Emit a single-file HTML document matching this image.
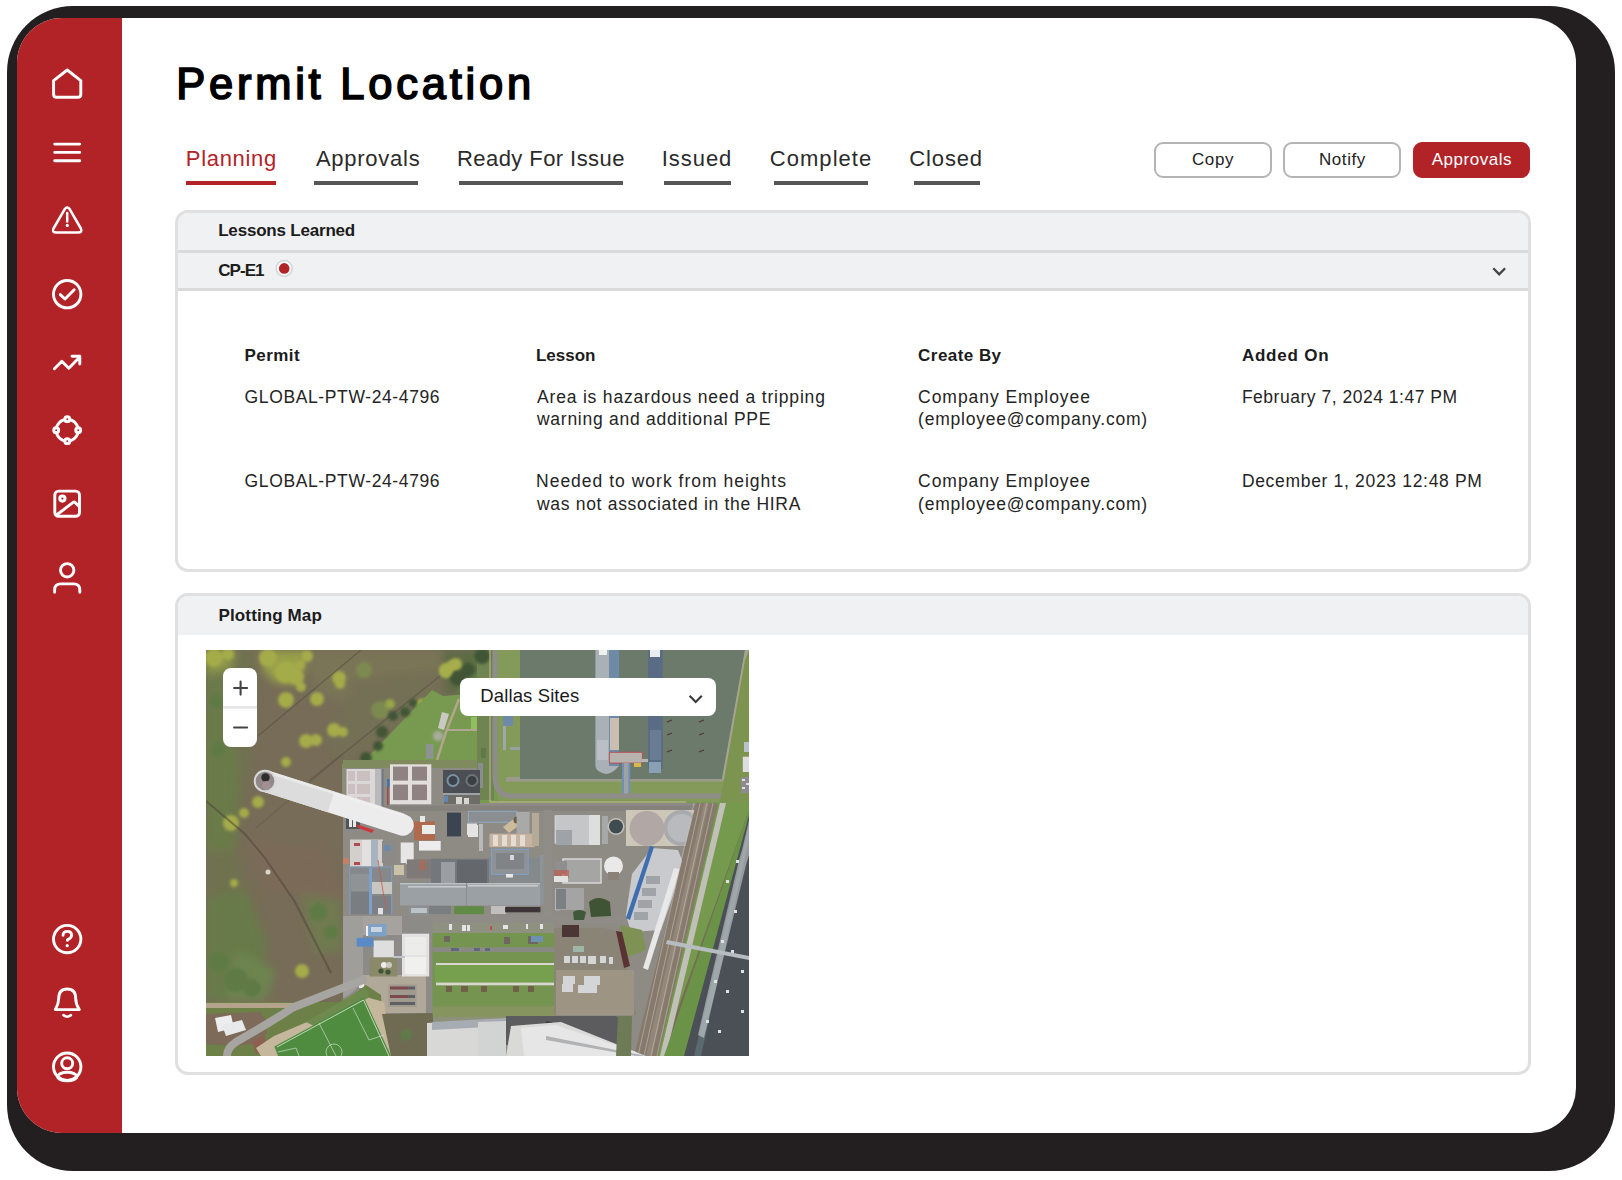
<!DOCTYPE html>
<html><head><meta charset="utf-8">
<style>
html,body{margin:0;padding:0;}
body{width:1622px;height:1180px;background:#fff;position:relative;overflow:hidden;font-family:"Liberation Sans",sans-serif;}
.a{position:absolute;}
.t{position:absolute;white-space:nowrap;line-height:1;}
#frame{left:7px;top:6px;width:1608px;height:1165px;background:#231f20;border-radius:66px;}
#screen{left:17px;top:18px;width:1559px;height:1115px;background:#fff;border-radius:45px;overflow:hidden;}
#side{left:0;top:0;width:105px;height:1115px;background:#b22328;}
.ic{position:absolute;left:47px;width:40px;height:40px;}
.tab{font-size:21px;color:#2e2e2e;letter-spacing:1px;}
.ul{position:absolute;top:181px;height:4px;background:#575757;}
.btn{position:absolute;top:142px;height:36px;box-sizing:border-box;border:2px solid #b4b4b4;border-radius:9px;background:#fff;}
.bt{font-size:18px;color:#222;}
.panel{position:absolute;left:175px;width:1356px;box-sizing:border-box;border:3px solid #e0e0e0;border-radius:13px;background:#fff;overflow:hidden;}
.ph{font-size:17px;font-weight:700;color:#1e1e1e;}
.th{font-size:17px;font-weight:700;color:#222;}
.td{font-size:18px;color:#262626;letter-spacing:0.4px;}
</style></head>
<body>
<div id="frame" class="a"></div>
<div id="screen" class="a">
  <div id="side" class="a"></div>
</div>
<svg class="a" style="left:0;top:0" width="1622" height="1180" viewBox="0 0 1622 1180">
<g fill="none" stroke="#fff" stroke-width="2.9" stroke-linecap="round" stroke-linejoin="round">
  <path d="M67.2 70 L53.6 80.6 V94.2 Q53.6 97.3 56.7 97.3 H77.7 Q80.8 97.3 80.8 94.2 V80.6 Z"/>
  <path d="M54.7 144.1 H79.7 M54.7 152.4 H79.7 M54.7 160.8 H79.7"/>
  <path d="M64.6 209.3 Q67.2 205.6 69.8 209.3 L80.9 228.5 Q82.8 232.5 78 232.5 H56.4 Q51.6 232.5 53.5 228.5 Z" stroke-width="2.5"/>
  <path d="M67.2 213 V221.5" stroke-width="2.5"/>
  <circle cx="67.2" cy="294.2" r="13.7"/>
  <path d="M60.3 294.6 L65 299 L74.2 289.8"/>
  <path d="M54.4 368.7 L61.8 361.3 L68.8 368.3 L79.8 357 M72 356.3 H79.8 V364"/>
  <circle cx="67.2" cy="430.2" r="11" />
  <circle cx="67.2" cy="494.2" r="0" />
  <rect x="54.8" y="491.1" width="24.7" height="25.2" rx="3.8"/>
  <circle cx="62.4" cy="498.6" r="2.6" stroke-width="3"/>
  <path d="M57.2 514.5 L72.8 502.6 Q74 501.6 75.2 502.6 L79.5 506.8"/>
  <circle cx="67.2" cy="570.3" r="6.7"/>
  <path d="M54.6 592.2 V590 Q54.6 583.9 60.7 583.9 H73.7 Q79.8 583.9 79.8 590 V592.2"/>
  <circle cx="67.2" cy="939.1" r="13.7"/>
  <path d="M63 935.4 Q63.2 931.3 67.3 931.3 Q71.6 931.3 71.6 935.2 Q71.6 937.9 67.4 939.8 V940.4" stroke-width="2.8"/>
  <path d="M55.3 1009.6 Q58.7 1004 58.7 998.5 Q58.7 989 67.2 989 Q75.7 989 75.7 998.5 Q75.7 1004 79.3 1009.6 Z"/>
  <path d="M63.4 1015 Q67.2 1018.6 71 1015" stroke-width="2.5"/>
  <circle cx="67.2" cy="1066.7" r="13.7"/>
  <circle cx="67.2" cy="1063.3" r="5.5"/>
  <ellipse cx="67.2" cy="1076.6" rx="9.6" ry="4.3"/>
</g>
<g fill="#fff">
  <circle cx="67.3" cy="225.4" r="1.6"/>
  <circle cx="67.2" cy="945.7" r="1.6"/>
</g>
<g fill="#b22328" stroke="#fff" stroke-width="3">
  <circle cx="67.3" cy="419.2" r="2.4"/>
  <circle cx="56.2" cy="430.2" r="2.4"/>
  <circle cx="78.2" cy="430.2" r="2.4"/>
  <circle cx="67.3" cy="441.2" r="2.4"/>
</g>
</svg>

<!-- tab underlines -->
<div class="ul" style="left:186px;width:90px;background:#b22328;"></div>
<div class="ul" style="left:314px;width:104px;"></div>
<div class="ul" style="left:459px;width:164px;"></div>
<div class="ul" style="left:664px;width:67px;"></div>
<div class="ul" style="left:774px;width:94px;"></div>
<div class="ul" style="left:914px;width:66px;"></div>

<!-- buttons -->
<div class="btn" style="left:1154px;width:118px;"></div>
<div class="btn" style="left:1283px;width:118px;"></div>
<div class="btn" style="left:1413px;width:117px;background:#b22328;border-color:#b22328;"></div>

<!-- lessons panel -->
<div class="panel" style="top:210px;height:362px;">
  <div class="a" style="left:0;top:0;width:100%;height:78px;background:#f0f1f3;"></div>
  <div class="a" style="left:0;top:37px;width:100%;height:3px;background:#dadada;"></div>
  <div class="a" style="left:0;top:75px;width:100%;height:3px;background:#dadada;"></div>
</div>
<svg class="a" style="left:270px;top:254px" width="30" height="30" viewBox="270 254 30 30">
<circle cx="284.2" cy="268.4" r="8" fill="#fff" stroke="#d6d6d6" stroke-width="1.6"/>
<circle cx="284.2" cy="268.4" r="5.3" fill="#b22328"/>
</svg>
<svg class="a" style="left:1485px;top:260px" width="30" height="24" viewBox="1485 260 30 24">
<path d="M1493.3 268.2 L1499.2 274.4 L1505.1 268.2" fill="none" stroke="#444" stroke-width="2.3"/>
</svg>

<!-- plotting panel -->
<div class="panel" style="top:593px;height:482px;">
  <div class="a" style="left:0;top:0;width:100%;height:38.5px;background:#f0f1f3;"></div>
</div>
<!--MAP-->
<svg class="a" style="left:206px;top:650px" width="543" height="406" viewBox="0 0 543 406">
<defs>
  <clipPath id="mc"><rect x="0" y="0" width="543" height="406"/></clipPath>
</defs>
<g clip-path="url(#mc)">
<!-- forest base -->
<defs>
<filter id="blur2" x="-20%" y="-20%" width="140%" height="140%"><feGaussianBlur stdDeviation="4"/></filter>
<filter id="blur1" x="-20%" y="-20%" width="140%" height="140%"><feGaussianBlur stdDeviation="1.5"/></filter>
</defs>
<rect x="0" y="0" width="543" height="406" fill="#766c57"/>
<g filter="url(#blur2)">
  <path d="M0 0 H50 L45 100 L30 200 L45 260 L0 280 Z" fill="#6f7250"/>
  <path d="M0 250 L40 240 L60 290 L55 350 L0 352 Z" fill="#687a4a"/>
  <path d="M30 300 L70 320 L60 350 L20 352 Z" fill="#6d8450"/>
  <path d="M95 246 L134 240 L137 300 L110 305 Z" fill="#6f7a50"/>
  <path d="M0 90 L25 85 L30 150 L0 160 Z" fill="#6a7a48"/>
  <path d="M100 0 H240 L230 30 L150 60 L110 40 Z" fill="#7a7456"/>
  <path d="M150 30 L230 20 L240 45 L160 100 L135 110 L120 90 Z" fill="#736f55"/>
  <path d="M236 0 H285 V40 L240 45 Z" fill="#5d6a45"/>
  <path d="M40 190 L120 200 L137 250 L60 240 Z" fill="#7b6a58"/>
</g>
<g filter="url(#blur2)">
  <path d="M55 0 H100 L98 20 L90 34 L70 33 L58 22 Z" fill="#97a04a"/>
  <path d="M0 0 H30 L25 20 L0 25 Z" fill="#8d9848"/>
  <path d="M0 25 L30 30 L28 200 L0 200 Z" fill="#6b7a4a"/>
</g>
<g filter="url(#blur1)">
<g fill="#a4ab4a">
<circle cx="80" cy="22" r="11"/><circle cx="90" cy="27" r="8"/><circle cx="62" cy="8" r="9"/><circle cx="101" cy="6" r="6"/><circle cx="94" cy="15" r="5"/><circle cx="8" cy="8" r="9"/><circle cx="22" cy="4" r="6"/><circle cx="80" cy="50" r="8"/><circle cx="95" cy="37" r="5"/><circle cx="111" cy="49" r="7"/><circle cx="133" cy="28" r="7"/><circle cx="134" cy="34" r="5"/><circle cx="128" cy="80" r="7"/><circle cx="137" cy="82" r="5"/><circle cx="100" cy="91" r="7"/><circle cx="110" cy="90" r="6"/><circle cx="80" cy="112" r="5"/><circle cx="216" cy="55" r="6.5"/><circle cx="240" cy="22" r="6"/><circle cx="246" cy="16" r="6"/><circle cx="52" cy="152" r="6"/><circle cx="25" cy="173" r="8"/><circle cx="38" cy="163" r="5"/><circle cx="96" cy="321" r="7"/><circle cx="28" cy="233" r="4"/>
<circle cx="174" cy="60" r="9" fill="#7d8a50"/><circle cx="158" cy="20" r="8" fill="#7d8a50"/>
</g>
<g fill="#5f7a45">
  <circle cx="12" cy="312" r="10"/><circle cx="30" cy="330" r="12"/><circle cx="46" cy="338" r="9"/>
  <circle cx="112" cy="262" r="9"/><circle cx="125" cy="282" r="7"/><circle cx="10" cy="52" r="7"/>
  <circle cx="12" cy="100" r="7"/><circle cx="258" cy="40" r="7"/><circle cx="270" cy="28" r="6"/><circle cx="275" cy="8" r="8"/>
</g>
</g>
<path d="M103 131 L234 26" stroke="#5a5044" stroke-width="1.5" opacity="0.6"/>
<path d="M52 86 L155 0" stroke="#5a5044" stroke-width="1.5" opacity="0.6"/>
<path d="M0 151 L39 184 L59 208 L89 252 L125 323" fill="none" stroke="#4f463d" stroke-width="2" opacity="0.55"/>
<path d="M50 178 L137 104" fill="none" stroke="#5a5044" stroke-width="1.2" opacity="0.35"/>
<circle cx="62" cy="222" r="2.5" fill="#d8d8cc"/>
<!-- lawn -->
<path d="M136 114 L160 109 L226 40 L237 46 L262 44 L276 18 L284 0 L543 0 L543 155 L136 155 Z" fill="#789a50"/>
<g filter="url(#blur1)" fill="#3f5535">
<circle cx="160" cy="108" r="6"/><circle cx="172" cy="96" r="5"/><circle cx="176" cy="82" r="6"/><circle cx="187" cy="66" r="5"/>
<circle cx="199" cy="62" r="5"/><circle cx="207" cy="53" r="4"/><circle cx="252" cy="28" r="8"/><circle cx="262" cy="20" r="7"/>
</g>
<circle cx="184" cy="54" r="5" fill="#97a548" filter="url(#blur1)"/>
<g filter="url(#blur1)" fill="#a6ae4c"><circle cx="240" cy="20" r="7"/><circle cx="250" cy="14" r="6"/></g>
<path d="M253 49 L240 82 L231 110" fill="none" stroke="#b3a58c" stroke-width="2.5"/>
<path d="M236 62 L243 64 L238 80 L232 78 Z" fill="#c9c9c4"/>
<rect x="220" y="94" width="7.5" height="14.6" fill="#8d9293"/>
<circle cx="232" cy="86" r="5" fill="#a9ad9f" filter="url(#blur1)"/>
<rect x="265" y="67" width="10" height="14" fill="#8fbf5e"/>
<path d="M240 79 H272 V81 H240 Z" fill="#b0a590"/>
<!-- left strip near basin -->
<rect x="271" y="0" width="17" height="150" fill="#6f8450"/>
<circle cx="276" cy="6" r="8" fill="#3f5535" filter="url(#blur1)"/>
<rect x="272" y="113" width="5" height="25" fill="#8a8c8e"/>
<rect x="275" y="98" width="5" height="10" fill="#5f7a45"/>
<!-- basin embankment -->
<path d="M292 0 H314 V129 H515 L537 0 H543 V152 H292 Z" fill="#849a5a"/>
<path d="M300 127 H518 L520 131.5 H300 Z" fill="#9c9a8c"/>
<!-- road around basin -->
<path d="M289 0 V128 Q290 145 305 146 H543" fill="none" stroke="#8e8d89" stroke-width="5"/>
<path d="M284 0 V152 H480" fill="none" stroke="#c8b995" stroke-width="1"/>
<rect x="297" y="60" width="10" height="16" fill="#6f8aa8"/>
<rect x="297" y="76" width="3" height="24" fill="#a3a6a8"/>
<rect x="304" y="97" width="10" height="3" fill="#9aa0a2"/>
<!-- water -->
<path d="M314 0 H539 L516 129 H314 Z" fill="#6b7a6b"/>
<path d="M539 0 H543 V10 L522 130 L516 129 Z" fill="#a9a394"/>
<!-- ships -->
<path d="M389.4 0 H413 V116 Q406 124 400 124 Q390 122 389.4 116 Z" fill="#a9b0b6"/>
<rect x="403" y="0" width="10" height="116" fill="#6e8aa6"/>
<rect x="391" y="40" width="11" height="2" fill="#d8c870" opacity="0.6"/>
<rect x="404" y="68" width="9" height="32" fill="#c8beb2"/>
<rect x="391" y="90" width="11" height="20" fill="#b9bfc4"/>
<rect x="393" y="0" width="8" height="5" fill="#f0f0f0"/>
<path d="M442.1 0 H456.7 V118 Q452 124 447 124 Q442.1 121 442.1 116 Z" fill="#5a6c85"/>
<rect x="444" y="0" width="10" height="7" fill="#e8ecee"/>
<rect x="444" y="80" width="11" height="30" fill="#6a7c94"/>
<rect x="443" y="112" width="12" height="11" fill="#8aa0b4"/>
<path d="M403.4 102.3 H436.4 V113.1 H403.4 Z" fill="#b9b3b0"/>
<path d="M403.4 102.3 H436.4 V113.1 H403.4 Z" fill="none" stroke="#b84a4e" stroke-width="0.9"/>
<rect x="436" y="109" width="6" height="3" fill="#b8b8b0"/>
<rect x="428" y="113" width="7" height="4" fill="#d8b848"/>
<rect x="416" y="113" width="8.3" height="30.6" fill="#7090b8"/>
<rect x="418" y="113" width="4.3" height="30.6" fill="#9ea2a4"/>
<g stroke="#4a3a34" stroke-width="1.2"><path d="M461 72 L466 70 M461 85 L466 83 M461 102 L466 100 M493 72 L498 70 M493 85 L498 83 M493 102 L498 100"/></g>
<!-- right embankment & buildings -->
<path d="M543 0 V152 H514 L539 10 Z" fill="#7d9451"/>
<rect x="536.8" y="106.7" width="6.2" height="15.3" fill="#dcdddf"/>
<rect x="538" y="92" width="5" height="10" fill="#b8c0c8"/>
<rect x="535" y="127" width="8" height="16" fill="#8d8a90"/>
<g fill="#e0e0e0"><rect x="536" y="129" width="3" height="2"/><rect x="540" y="133" width="3" height="2"/><rect x="536" y="137" width="3" height="2"/></g>
<!-- industrial base -->
<path d="M137 112 L271 112 L271 153 L500 153 L470 260 L445 350 L430 406 L137 406 Z" fill="#8e8a84"/>
<rect x="137" y="110" width="134" height="8" fill="#7f8a5e"/>
<!-- road across -->
<rect x="175" y="155.5" width="335" height="5.5" fill="#85827e"/>
<!-- buildings top row -->
<rect x="140.5" y="119" width="35" height="37.5" fill="#dcd8d7"/>
<g fill="#cbbfbf"><rect x="142" y="121" width="7" height="10"/><rect x="151" y="121" width="13" height="10"/><rect x="142" y="134" width="7" height="10"/><rect x="151" y="134" width="13" height="10"/><rect x="142" y="147" width="7" height="8"/><rect x="151" y="147" width="13" height="8"/></g>
<rect x="169" y="119" width="6" height="37.5" fill="#b9b9bb"/>
<rect x="175.5" y="119" width="2" height="37.5" fill="#6e7683"/>
<rect x="181" y="129" width="2.5" height="8" fill="#3f74b0"/>
<rect x="181" y="137" width="1.5" height="18" fill="#a4404a"/>
<rect x="184" y="114.3" width="41.3" height="40" fill="#e1dedc"/>
<g fill="#8e8282"><rect x="187" y="116.6" width="15" height="14"/><rect x="206" y="116.6" width="15" height="14"/><rect x="187" y="134.6" width="15" height="15.5"/><rect x="206" y="134.6" width="15" height="15.5"/></g>
<rect x="237" y="120" width="37" height="23" fill="#4b4f53"/>
<circle cx="247" cy="130.5" r="6.5" fill="#7a93a6"/><circle cx="266" cy="130.5" r="6.5" fill="#6f7478"/>
<circle cx="247" cy="130.5" r="4.5" fill="#3c4247"/><circle cx="266" cy="130.5" r="4.5" fill="#3a3f44"/>
<rect x="237" y="143" width="37" height="2" fill="#9fa2a4"/>
<rect x="238" y="145" width="36" height="9" fill="#6f6d68"/>
<rect x="238" y="146" width="4" height="6" fill="#5f87b8"/>
<rect x="250" y="147" width="6" height="7" fill="#d8d6d2"/>
<rect x="258" y="148" width="5" height="6" fill="#d8d6d2"/>
<!-- second row -->
<rect x="138.6" y="166" width="19" height="15" fill="#8a8a88"/>
<rect x="140" y="167" width="14" height="12" fill="#4f5457"/>
<rect x="143" y="168" width="3" height="9" fill="#e8e8e8"/><rect x="147" y="168" width="3" height="9" fill="#e8e8e8"/>
<path d="M150 174 L168 180 L166 183 L152 178 Z" fill="#c8383c"/>
<rect x="241" y="162.6" width="14" height="23.8" fill="#3a4550"/>
<rect x="261" y="173.5" width="10" height="11.5" fill="#e2e2e2"/>
<rect x="208" y="171.4" width="21" height="19" fill="#b06a4e"/>
<rect x="216" y="175" width="13" height="9" fill="#ececea"/>
<rect x="214" y="166" width="5" height="6" fill="#e6e6e6"/>
<rect x="262.5" y="161.2" width="48" height="11" fill="#8a8e90"/>
<rect x="262.5" y="161.2" width="48" height="11" fill="none" stroke="#8fb0d0" stroke-width="0.8"/>
<rect x="262" y="175" width="10" height="12" fill="#e4e4e4"/>
<rect x="273" y="174" width="4" height="27" fill="#b8b8b8"/>
<path d="M297 177 L309 168 L315 174 L303 183 Z" fill="#cdbb9c"/>
<circle cx="311" cy="170" r="3.5" fill="#6a5a4c"/>
<rect x="310.6" y="162" width="13" height="21.6" fill="#a9a9a7"/>
<rect x="283.5" y="183.6" width="45" height="13.6" fill="#c6b3a0"/>
<g fill="#e4ddd4"><rect x="287" y="185" width="5" height="11"/><rect x="296" y="185" width="5" height="11"/><rect x="305" y="185" width="5" height="11"/><rect x="314" y="185" width="5" height="11"/></g>
<rect x="326" y="163" width="7" height="33" fill="#b3aa98"/>
<!-- left column buildings -->
<rect x="144" y="189.5" width="33" height="27" fill="#d2cfcc"/>
<rect x="156" y="190" width="9" height="26" fill="#e3e1df"/>
<rect x="148" y="193" width="6" height="3" fill="#b24a50"/>
<rect x="148" y="212" width="6" height="3" fill="#b24a50"/>
<rect x="165" y="190" width="7" height="26" fill="#a7b4c0"/>
<rect x="176" y="191" width="13" height="22" fill="#8b8a86"/>
<rect x="178" y="195" width="7" height="6" fill="#6f8aa8"/>
<rect x="137" y="208" width="6" height="6" fill="#c2806a"/>
<rect x="143.8" y="217" width="42" height="50" fill="#86898c"/>
<rect x="143.8" y="217" width="42" height="50" fill="none" stroke="#7ea0c8" stroke-width="0.9"/>
<rect x="145" y="224" width="18" height="17" fill="#8f9396"/>
<rect x="163" y="218" width="3" height="48" fill="#7ea0c8"/>
<rect x="145" y="242" width="18" height="24" fill="#7a7e82"/>
<rect x="166" y="232" width="20" height="12" fill="#c8c6c2"/>
<rect x="166" y="246" width="19" height="20" fill="#7c8084"/>
<rect x="172" y="258" width="5" height="7" fill="#e2e2e2"/>
<path d="M172 210 L180 260" stroke="#c65a4a" stroke-width="0.8"/>
<!-- big central building -->
<rect x="194.7" y="192.5" width="13" height="21.7" fill="#e6e6e6"/>
<rect x="213" y="191" width="21.7" height="9.6" fill="#ececec"/>
<rect x="188" y="213" width="12" height="20" fill="#8e8c88"/>
<rect x="188" y="215" width="10" height="10" fill="#c9c2a8"/>
<rect x="200.8" y="209.4" width="24.4" height="19" fill="#7f7a78"/>
<rect x="214" y="210" width="5" height="10" fill="#a86a5a"/>
<rect x="225" y="208.7" width="110" height="25" fill="#74777b"/>
<rect x="235" y="212" width="14" height="21" fill="#9a9ea2"/>
<rect x="251" y="210" width="30" height="23" fill="#64676c"/>
<rect x="283" y="208" width="52" height="25" fill="#86898c"/>
<rect x="285.5" y="199.2" width="36.7" height="25.1" fill="#8e9295"/>
<rect x="285.5" y="199.2" width="36.7" height="25.1" fill="none" stroke="#7ea0c8" stroke-width="1"/>
<rect x="290" y="203" width="28" height="16" fill="#818487"/>
<rect x="304" y="205" width="4" height="5" fill="#d8d8d8"/>
<rect x="300" y="224" width="7" height="3.5" fill="#e8e8e8"/>
<rect x="194" y="233.1" width="140.4" height="22.4" fill="#9aa0a4"/>
<rect x="194" y="233.1" width="140.4" height="1.2" fill="#c0c5c8"/>
<g fill="#c6cacd"><rect x="202" y="236" width="58" height="1.6"/><rect x="262" y="235" width="70" height="1.6"/></g>
<rect x="260" y="233" width="1" height="22" fill="#888d91"/>
<rect x="334" y="205" width="8" height="50" fill="#8d9498"/>
<rect x="348.6" y="165.3" width="5.7" height="28.5" fill="#d0d2d3"/>
<rect x="349" y="238.6" width="5.3" height="21.7" fill="#c8cacb"/>
<rect x="337.7" y="160" width="8" height="120" fill="#908d88"/>
<rect x="203" y="256" width="20" height="9" fill="#8a9096"/>
<rect x="205" y="258" width="16" height="5" fill="#bcc3c6"/>
<rect x="223" y="256" width="22" height="8" fill="#7b7e7f"/>
<rect x="248.2" y="256.2" width="29.8" height="8.1" fill="#5f8b45"/>
<rect x="285" y="256" width="15" height="8" fill="#c0bfbd"/>
<rect x="299.1" y="257" width="35.3" height="5.3" fill="#3d3438"/>
<rect x="137" y="264.3" width="290" height="8.2" fill="#8f8c88"/>
<g fill="#e0e0e0"><rect x="239" y="274" width="3" height="5"/><rect x="257" y="273" width="3" height="5"/><rect x="262" y="273" width="3" height="5"/><rect x="280" y="273" width="2" height="5"/><rect x="330" y="273" width="3" height="5"/><rect x="300" y="274" width="3" height="5"/></g>
<!-- right middle (second row right part) -->
<rect x="350" y="165" width="44" height="30" fill="#c4c6c8"/>
<rect x="350" y="180" width="16" height="15" fill="#9ea3a7"/>
<rect x="383" y="165" width="11" height="30" fill="#dddede"/>
<rect x="396" y="166" width="6" height="28" fill="#a7a9a9"/>
<circle cx="410" cy="176.5" r="8.5" fill="#c4c0b8"/>
<circle cx="410" cy="176.5" r="7" fill="#3e4c52"/>
<rect x="420" y="160" width="70" height="36" fill="#cdc7b9"/>
<circle cx="441" cy="178.5" r="17.5" fill="#b1a7a4"/>
<circle cx="475.5" cy="178" r="18" fill="#a9aaad"/>
<circle cx="475.5" cy="178" r="14" fill="#b9babd"/>
<rect x="357" y="209" width="38" height="24" fill="#a5a5a3"/>
<rect x="357" y="209" width="38" height="24" fill="none" stroke="#d8d8d6" stroke-width="1.5"/>
<rect x="349" y="211" width="12" height="13" fill="#8f8f8f"/>
<rect x="348" y="220" width="15" height="8" fill="#c7544a" opacity="0.6"/>
<rect x="348" y="226" width="14" height="6" fill="#e2e2e0"/>
<circle cx="407.5" cy="216" r="9.5" fill="#e9e9e9"/>
<rect x="402" y="222" width="11" height="8" fill="#8a8278"/>
<rect x="349.5" y="238" width="28.5" height="22" fill="#a4a4a4"/>
<rect x="350" y="239" width="10" height="20" fill="#7c8084"/>
<path d="M383 252 Q392 244 404 252 L405 266 L385 267 Z" fill="#3e5434"/>
<path d="M367 262 Q373 258 380 262 L378 270 L368 270 Z" fill="#40583a"/>
<!-- machinery right -->
<path d="M426 224 L446 198 L472 200 L478 215 L455 280 L425 282 L420 265 Z" fill="#c8cacd"/>
<path d="M420 268 L444 196 L448 197 L424 270 Z" fill="#3f6eb0"/>
<path d="M468 218 L474 219 L442 320 L437 318 Z" fill="#e8e8e8"/>
<g fill="#a0a4a8"><rect x="440" y="226" width="14" height="8"/><rect x="436" y="238" width="14" height="8"/><rect x="432" y="250" width="14" height="8"/><rect x="428" y="262" width="14" height="8"/></g>

<!-- green fields lower middle -->
<rect x="226.5" y="273" width="122" height="10" fill="#8e9080"/>
<g fill="#e4e4e4"><rect x="243" y="274" width="3" height="6"/><rect x="256" y="275" width="4" height="6"/><rect x="261" y="275" width="3" height="6"/><rect x="297" y="275" width="5" height="4"/><rect x="320" y="274" width="2" height="5"/><rect x="334" y="274" width="3" height="5"/></g>
<rect x="284" y="276" width="2" height="4" fill="#c84848"/>
<path d="M226.5 283 H348.6 V367 H226.5 Z" fill="#74944f"/>
<rect x="226.5" y="297.3" width="122" height="4.7" fill="#8a8a84"/>
<g fill="#5c6a78"><rect x="245" y="298" width="8" height="3"/><rect x="268" y="298" width="6" height="3"/><rect x="279" y="298" width="5" height="3"/></g>
<g fill="#6e6660"><rect x="238" y="286" width="6" height="6"/><rect x="298" y="287" width="6" height="7"/><rect x="322" y="286" width="10" height="8"/></g>
<rect x="325" y="286" width="12" height="6" fill="#6f90b0"/>
<rect x="230" y="313" width="118" height="2" fill="#d8d6cf"/>
<rect x="229" y="315" width="119" height="17.6" fill="#77a04e"/>
<rect x="230" y="332.6" width="118" height="2.7" fill="#d8d6cf"/>
<g fill="#6f6048"><rect x="240" y="336" width="6" height="6"/><rect x="255" y="336" width="7" height="6"/><rect x="275" y="336" width="6" height="6"/><rect x="307" y="336" width="6" height="6"/><rect x="322" y="336" width="6" height="6"/></g>
<rect x="226.5" y="356.3" width="122" height="10.8" fill="#86955f"/>
<rect x="226.5" y="367" width="122" height="5.6" fill="#8d917a"/>
<!-- containers yard -->
<path d="M348 278 H398 L414 282 L430 365 H348 Z" fill="#8a8477"/>
<path d="M350 320 H428 V365 H350 Z" fill="#9e9483"/>
<rect x="356" y="275" width="17" height="12" fill="#4b3535"/>
<g fill="#d3d5d6">
<rect x="358" y="306" width="6" height="7"/><rect x="366" y="306" width="6" height="7"/><rect x="374" y="306" width="6" height="7"/><rect x="382" y="306" width="8" height="8"/><rect x="394" y="306" width="6" height="7"/><rect x="403" y="307" width="4" height="7"/>
<rect x="357" y="326" width="12" height="8"/><rect x="378" y="326" width="16" height="9"/><rect x="356" y="334" width="11" height="8"/><rect x="372" y="335" width="19" height="8"/>
</g>
<rect x="367" y="296" width="11" height="6" fill="#9fb5a6"/>
<path d="M414 275 L436 280 L440 300 L420 308 Z" fill="#7f9256"/>
<path d="M410 281 L416 282 L424 316 L418 318 Z" fill="#5b3233"/>
<!-- rails & right strips -->
<path d="M490 153 H512 L452 406 H428 Z" fill="#867a6d"/>
<path d="M498 153 H503 L446 406 H440 Z" fill="#9c8f82" opacity="0.6"/>
<g stroke="#c9c2b8" stroke-width="0.7" opacity="0.8"><path d="M488 153 L432 406 M494 153 L438 406 M501 153 L445 406 M507 153 L451 406"/></g>
<path d="M512 153 H543 V160 L455 406 H452 Z" fill="#759a4d"/>
<path d="M514 153 H520 L460 406 H454 Z" fill="#c0c0b8"/>
<path d="M543 160 L543 175 L480 406 H458 Z" fill="#6b9348"/>
<path d="M543 165 V406 H478 Z" fill="#4b4f56"/>
<path d="M543 175 V190 L495 406 H488 Z" fill="#5a6a6e"/>
<g fill="#dfe2e4">
<rect x="520" y="230" width="3" height="3"/><rect x="530" y="210" width="3" height="3"/><rect x="528" y="260" width="3" height="3"/><rect x="515" y="290" width="3" height="3"/><rect x="525" y="300" width="3" height="3"/><rect x="508" y="330" width="3" height="3"/><rect x="520" y="340" width="3" height="3"/><rect x="500" y="370" width="3" height="3"/><rect x="512" y="380" width="3" height="3"/><rect x="535" y="320" width="3" height="3"/><rect x="535" y="360" width="3" height="3"/>
</g>
<path d="M543 170 L536 200 L533 210 L500 350 L492 385 L498 388 L540 215 L543 205 Z" fill="#e2e4e6" opacity="0.5"/>
<path d="M461 290 L543 306 V310 L460 294 Z" fill="#b7bcc0"/>
<!-- industrial left: ground & roads -->
<rect x="137" y="266" width="89" height="100" fill="#8d8b87"/>
<path d="M139 266 H157 V330 Q150 342 137 348 V266 Z" fill="#a09e9a"/>
<path d="M157 325 H220 V363 H157 Z" fill="#b0a898"/>
<path d="M157 266 H196 V285 H157 Z" fill="#a6a39f"/>
<rect x="196" y="283.7" width="27.2" height="42.8" fill="#e2e2e2"/>
<rect x="199" y="287" width="21" height="18" fill="#ececea"/>
<rect x="199" y="307" width="21" height="17" fill="#f0f0ef"/>
<rect x="167.5" y="290.5" width="20.4" height="17" fill="#dedede"/>
<rect x="160" y="276" width="7" height="10" fill="#f0f0f0"/>
<rect x="162.1" y="274.2" width="18.3" height="12.2" fill="#7ea1c8"/>
<rect x="165" y="277" width="11" height="5" fill="#c8d4de"/>
<rect x="150.6" y="287.8" width="16.9" height="8.8" fill="#5b8bc7"/>
<rect x="163.5" y="307.5" width="27.8" height="19" fill="#8a8a6a"/>
<circle cx="178" cy="315" r="3" fill="#ececec"/>
<circle cx="183" cy="315" r="3" fill="#c9c9c0"/>
<circle cx="175" cy="321" r="2.6" fill="#3f5535"/><circle cx="182" cy="322" r="2.6" fill="#3f5535"/>
<rect x="187" y="306" width="12" height="2" fill="#c0c4c6"/>
<rect x="182.5" y="334.6" width="28" height="22.4" fill="#a09a8e"/>
<g fill="#7a4a4c"><rect x="184" y="336.5" width="18" height="3"/><rect x="184" y="345" width="18" height="3"/></g>
<g fill="#5f5f66"><rect x="202" y="336.5" width="7" height="3"/><rect x="202" y="345" width="7" height="3"/><rect x="184" y="352" width="25" height="3"/></g>
<rect x="153" y="333" width="5" height="5" fill="#e8e8e8"/>
<!-- left strip below forest: path, road, grass -->
<path d="M0 352 L137 352 L160 335 L175 345 L178 406 L0 406 Z" fill="#6c8048"/>
<path d="M0 353 H92 L96 358 H0 Z" fill="#b4a48c"/>
<path d="M0 364 L55 362 L62 375 L58 392 L30 396 L0 394 Z" fill="#7e6a58"/>
<path d="M9 368 L25 365 L28 378 L12 382 Z" fill="#ededee"/>
<path d="M16 375 L36 370 L40 380 L20 386 Z" fill="#e8e9ea"/>
<path d="M46 392 L58 386 L62 398 L50 404 Z" fill="#8f5e52"/>
<path d="M50 398 L68 386 L160 347 L178 352 L186 406 H55 Z" fill="#c4b79c"/>
<path d="M88 357 L157 330" stroke="#a7a5a1" stroke-width="8" stroke-linecap="round"/>
<path d="M88 357 Q60 375 30 392 Q21 398 21 406" fill="none" stroke="#a7a5a1" stroke-width="8"/>
<path d="M100 372 L158 338 L163 342 L162 348 L108 376 Z" fill="#6f8a4f"/>
<path d="M68.4 396.6 L158 347.6 L185 406 H72 Z" fill="#4f8c40"/>
<path d="M71 397 L157.5 350 L183 406" fill="none" stroke="#dfeadb" stroke-width="0.8"/>
<path d="M113 373 L130 406" stroke="#dfeadb" stroke-width="0.6"/>
<path d="M147 358 L163 390 L178 385" fill="none" stroke="#dfeadb" stroke-width="0.6"/>
<circle cx="128" cy="402" r="8" fill="none" stroke="#dfeadb" stroke-width="0.6"/>
<path d="M72 402 L90 398 L93 406" fill="none" stroke="#dfeadb" stroke-width="0.6"/>
<!-- bottom area -->
<path d="M176 364 L226.5 363 L230 406 H185 Z" fill="#6f6a52"/>
<circle cx="200" cy="385" r="6" fill="#5f7a48" filter="url(#blur1)"/>
<path d="M221 373 L300 369 V406 H221 Z" fill="#d8d8d7"/>
<path d="M226 372 L300 368 V376 L226 380 Z" fill="#a6acb2"/>
<path d="M300 366 H410 Q420 370 418 395 H300 Z" fill="#5c5c5e"/>
<path d="M340 371 L346 372 L344 384 L338 383 Z" fill="#3f3f40"/>
<path d="M305 376 L355 372 L440 406 H300 Z" fill="#d9d9d8"/>
<path d="M315 378 L350 375 L430 402 L432 406 H318 Z" fill="#e6e6e6"/>
<path d="M340 386 L440 406 H430 L340 390 Z" fill="#b0b2b4"/>
<path d="M272 372 L300 371 V406 H272 Z" fill="#d2d3d3"/>
<path d="M412 366 L426 366 L425 406 L410 406 Z" fill="#6e7b56"/>
</g>
<!-- chimney -->
<g>
  <path d="M59 131 L197 175" stroke="#ececec" stroke-width="21.5" stroke-linecap="round"/>
  <path d="M59 131 L125 152" stroke="#dcdcdc" stroke-width="21.5"/>
  <path d="M62 122 L198 165" stroke="#f2f2f2" stroke-width="3" opacity="0.6"/>
  <circle cx="59" cy="131" r="11.3" fill="#d8d8d8"/>
  <circle cx="59" cy="131" r="9.3" fill="#8f8888"/>
  <circle cx="59.5" cy="127.5" r="4.2" fill="#2e2c2c"/>
  <circle cx="60.5" cy="135.5" r="4.5" fill="#a09090"/>
</g>
<!-- zoom control -->
<rect x="17" y="18" width="34" height="79" rx="8" fill="#fff"/>
<rect x="17" y="56" width="34" height="2.8" fill="#e6e6e6"/>
<path d="M34.6 31.6 V44.6 M28.1 38 H41.1" stroke="#444" stroke-width="2.1" stroke-linecap="round"/>
<path d="M28.1 77.5 H41.1" stroke="#444" stroke-width="2.1" stroke-linecap="round"/>
<!-- dropdown -->
<rect x="254" y="28" width="256" height="38" rx="8" fill="#fff"/>
<path d="M483.6 45.8 L489.7 52 L495.8 45.8" fill="none" stroke="#3a3a3a" stroke-width="2.1"/>
</svg>

<!--/MAP-->
<!--TEXT-->
<div class="t" style="left:176.2px;top:62.9px;font-size:43.5px;font-weight:400;letter-spacing:3.765px;color:#000;-webkit-text-stroke:1.7px #000;">Permit Location</div>
<div class="t" style="left:185.8px;top:148.0px;font-size:22px;font-weight:400;letter-spacing:0.686px;color:#b22328;">Planning</div>
<div class="t" style="left:315.9px;top:148.0px;font-size:22px;font-weight:400;letter-spacing:0.75px;color:#2b2b2b;">Approvals</div>
<div class="t" style="left:457.0px;top:148.0px;font-size:22px;font-weight:400;letter-spacing:0.429px;color:#2b2b2b;">Ready For Issue</div>
<div class="t" style="left:661.8px;top:148.0px;font-size:22px;font-weight:400;letter-spacing:0.94px;color:#2b2b2b;">Issued</div>
<div class="t" style="left:769.8px;top:148.0px;font-size:22px;font-weight:400;letter-spacing:1.042px;color:#2b2b2b;">Complete</div>
<div class="t" style="left:909.3px;top:148.0px;font-size:22px;font-weight:400;letter-spacing:0.86px;color:#2b2b2b;">Closed</div>
<div class="t" style="left:1191.9px;top:150.8px;font-size:17px;font-weight:400;letter-spacing:0.667px;color:#222;">Copy</div>
<div class="t" style="left:1319.0px;top:150.8px;font-size:17px;font-weight:400;letter-spacing:0.56px;color:#222;">Notify</div>
<div class="t" style="left:1431.7px;top:150.8px;font-size:17px;font-weight:400;letter-spacing:0.525px;color:#fff;">Approvals</div>
<div class="t" style="left:218.2px;top:222.0px;font-size:17px;font-weight:700;letter-spacing:-0.2px;color:#1c1c1c;">Lessons Learned</div>
<div class="t" style="left:218.2px;top:261.8px;font-size:17px;font-weight:700;letter-spacing:-0.925px;color:#1c1c1c;">CP-E1</div>
<div class="t" style="left:218.6px;top:607.1px;font-size:17px;font-weight:700;letter-spacing:0.108px;color:#1c1c1c;">Plotting Map</div>
<div class="t" style="left:244.4px;top:347.0px;font-size:17px;font-weight:700;letter-spacing:0.48px;color:#1c1c1c;">Permit</div>
<div class="t" style="left:536.0px;top:347.0px;font-size:17px;font-weight:700;letter-spacing:-0.02px;color:#1c1c1c;">Lesson</div>
<div class="t" style="left:918.1px;top:347.0px;font-size:17px;font-weight:700;letter-spacing:0.45px;color:#1c1c1c;">Create By</div>
<div class="t" style="left:1241.9px;top:347.0px;font-size:17px;font-weight:700;letter-spacing:0.786px;color:#1c1c1c;">Added On</div>
<div class="t" style="left:244.6px;top:389.0px;font-size:17.5px;font-weight:400;letter-spacing:0.618px;color:#242424;">GLOBAL-PTW-24-4796</div>
<div class="t" style="left:537.0px;top:389.0px;font-size:17.5px;font-weight:400;letter-spacing:0.818px;color:#242424;">Area is hazardous need a tripping</div>
<div class="t" style="left:537.0px;top:411.0px;font-size:17.5px;font-weight:400;letter-spacing:0.736px;color:#242424;">warning and additional PPE</div>
<div class="t" style="left:918.1px;top:389.0px;font-size:17.5px;font-weight:400;letter-spacing:0.954px;color:#242424;">Company Employee</div>
<div class="t" style="left:918.1px;top:411.0px;font-size:17.5px;font-weight:400;letter-spacing:0.767px;color:#242424;">(employee@company.com)</div>
<div class="t" style="left:1241.9px;top:389.0px;font-size:17.5px;font-weight:400;letter-spacing:0.518px;color:#242424;">February 7, 2024 1:47 PM</div>
<div class="t" style="left:244.6px;top:473.0px;font-size:17.5px;font-weight:400;letter-spacing:0.618px;color:#242424;">GLOBAL-PTW-24-4796</div>
<div class="t" style="left:536.0px;top:473.0px;font-size:17.5px;font-weight:400;letter-spacing:1.007px;color:#242424;">Needed to work from heights</div>
<div class="t" style="left:537.0px;top:495.5px;font-size:17.5px;font-weight:400;letter-spacing:0.694px;color:#242424;">was not associated in the HIRA</div>
<div class="t" style="left:918.1px;top:473.0px;font-size:17.5px;font-weight:400;letter-spacing:0.954px;color:#242424;">Company Employee</div>
<div class="t" style="left:918.1px;top:495.5px;font-size:17.5px;font-weight:400;letter-spacing:0.767px;color:#242424;">(employee@company.com)</div>
<div class="t" style="left:1241.9px;top:473.0px;font-size:17.5px;font-weight:400;letter-spacing:0.679px;color:#242424;">December 1, 2023 12:48 PM</div>
<div class="t" style="left:480.3px;top:686.6px;font-size:18.5px;font-weight:400;letter-spacing:0.118px;color:#1a1a1a;">Dallas Sites</div>
<!--/TEXT-->
</body></html>
